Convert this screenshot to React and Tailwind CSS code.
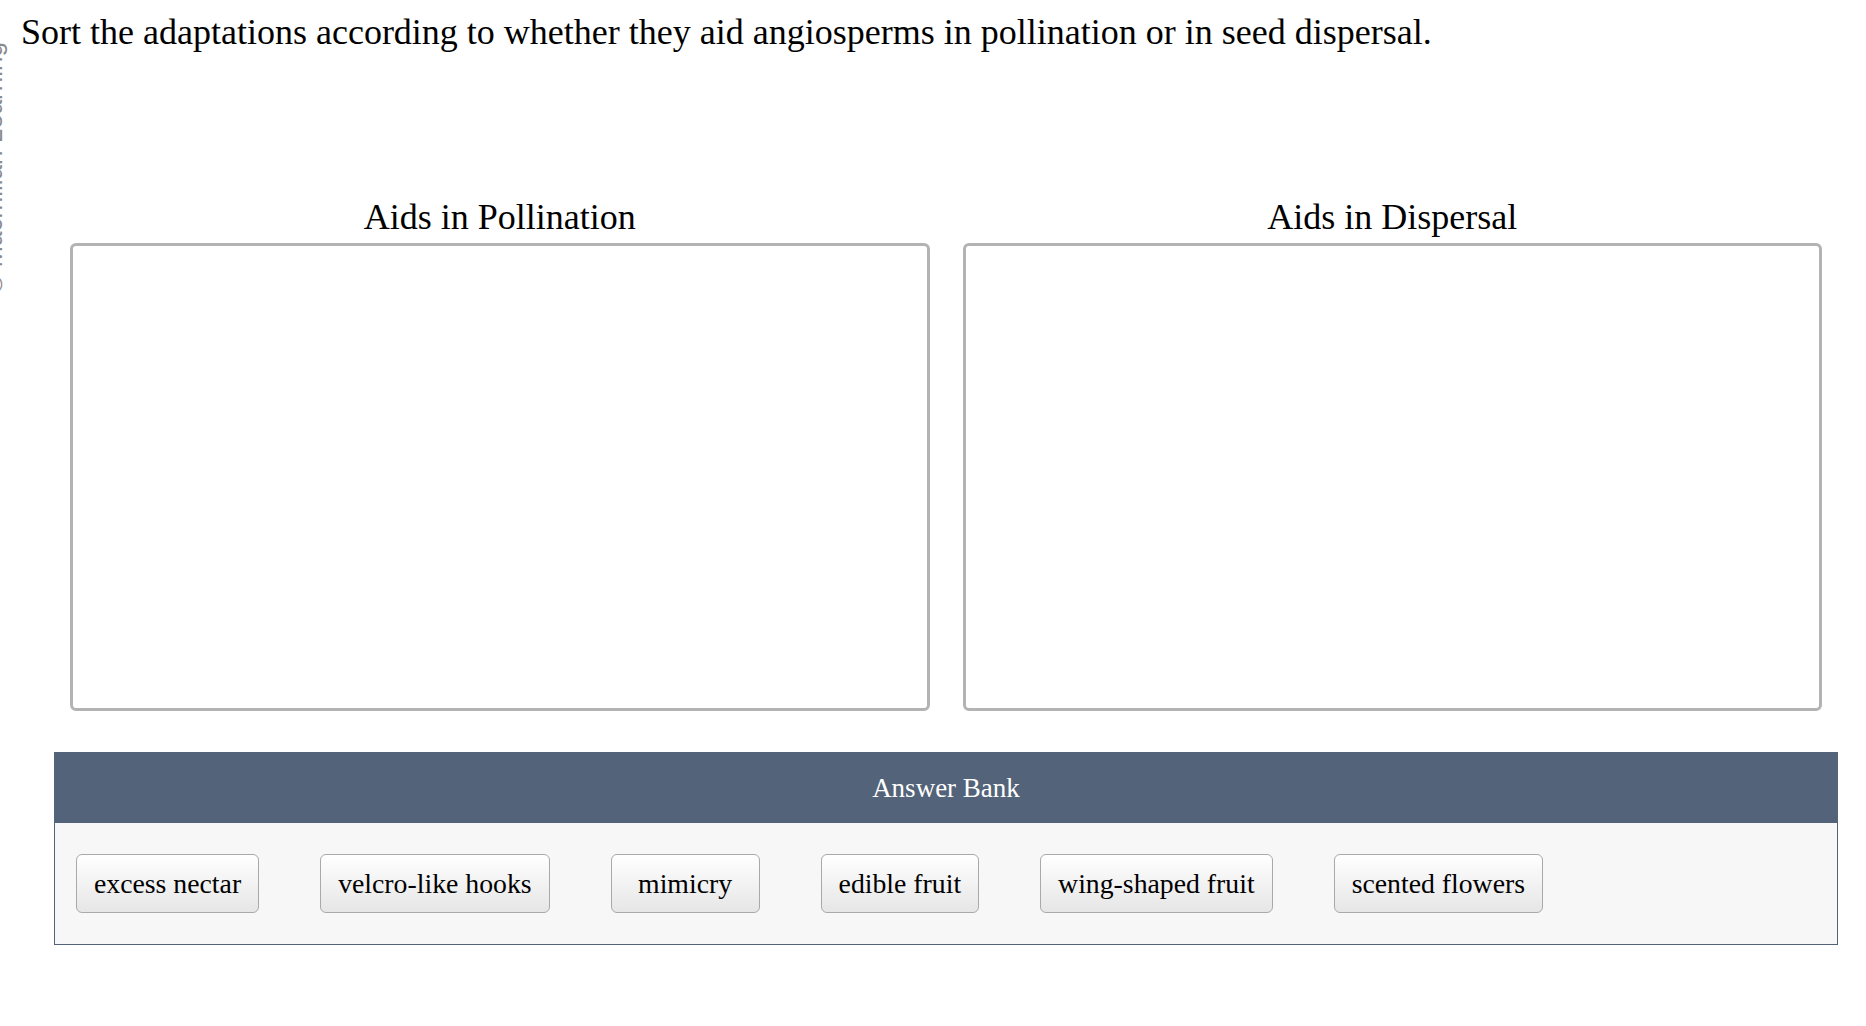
const bins = [
    { title: 'Aids in Pollination' },
    { title: 'Aids in Dispersal' },
]

const answers = [
    'excess nectar',
    'velcro-like hooks',
    'mimicry',
    'edible fruit',
    'wing-shaped fruit',
    'scented flowers',
]

export default function App() {
    return (
        <div className="relative w-full h-[1026px] bg-white overflow-hidden font-['Liberation_Serif','Times_New_Roman',serif] text-black">
            {/* Copyright strip, mostly off-screen */}
            <div className="absolute left-[-22px] top-[32px] h-[272px] w-[30px] flex items-center justify-center">
                <span className="block -rotate-90 whitespace-nowrap font-['Liberation_Sans',Arial,sans-serif] text-[26px] leading-[30px] text-[#8a8a8a]">
                    © Macmillan Learning
                </span>
            </div>

            {/* Prompt */}
            <h1 className="pl-[21px] pt-[12px] text-[36px] leading-[40px] font-normal">
                Sort the adaptations according to whether they aid angiosperms in pollination or in seed dispersal.
            </h1>

            {/* Drop zones */}
            <div className="ml-[70px] mt-[144px] w-[1752px] grid grid-cols-2 gap-[33px]">
                {bins.map((bin) => (
                    <div key={bin.title} className="flex flex-col">
                        <h2 className="text-center text-[36px] leading-[42px] font-normal mb-[5px]">{bin.title}</h2>
                        <div className="h-[468px] border-[3px] border-[#b3b3b3] rounded-[6px] bg-white" />
                    </div>
                ))}
            </div>

            {/* Answer bank */}
            <div className="ml-[54px] mt-[41px] w-[1784px] border border-[#53637b]">
                <div className="h-[70px] bg-[#536379] flex items-center justify-center text-white text-[27px]">
                    Answer Bank
                </div>
                <div className="h-[121px] bg-[#f7f7f7] flex items-center gap-[61px] pl-[21px]">
                    {answers.map((a) => (
                        <button
                            key={a}
                            className="h-[59px] min-w-[149px] px-[17px] rounded-[6px] border-[1.5px] border-[#a9a9a9] bg-gradient-to-b from-white to-[#e6e6e6] text-[27.75px] leading-none text-black whitespace-nowrap"
                        >
                            {a}
                        </button>
                    ))}
                </div>
            </div>
        </div>
    )
}
